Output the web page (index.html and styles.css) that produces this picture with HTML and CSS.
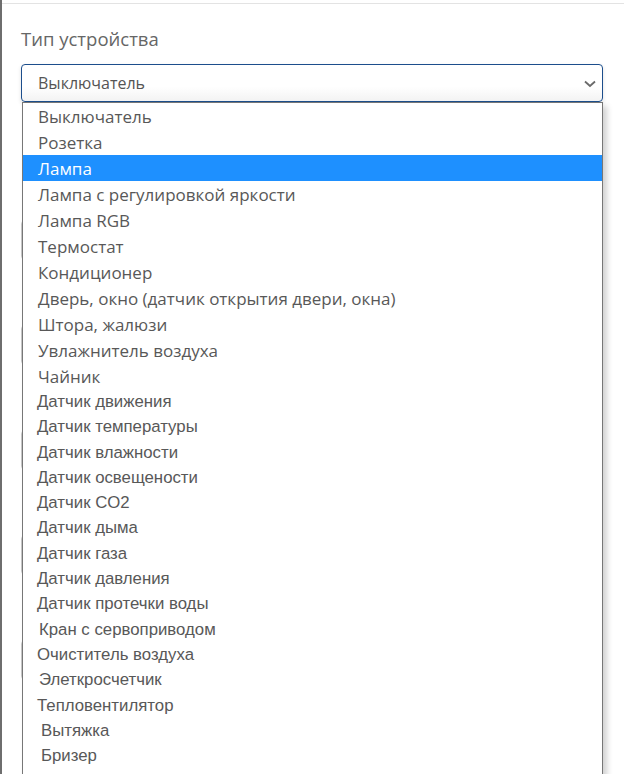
FILE: index.html
```html
<!DOCTYPE html>
<html lang="ru">
<head>
    <meta charset="UTF-8">
    <meta name="viewport" content="width=device-width, initial-scale=1.0">
    <title>Тип устройства</title>
    <link rel="stylesheet" href="styles.css">
</head>
<body>
    <div class="modal">
        <div class="modal-header"></div>
        <div class="modal-body">
            <div class="form-group select-group">
                <label class="form-label" for="deviceType">Тип устройства</label>
                <div class="select-box" id="deviceType">
                    <span class="select-value">Выключатель</span>
                    <svg class="chevron" width="12" height="8" viewBox="0 0 12 8">
                        <path d="M1 1.5 L6 6 L11 1.5" fill="none" stroke="#6a6a6a" stroke-width="1.8"/>
                    </svg>
                </div>

                <ul class="dropdown">
                    <li>Выключатель</li>
                    <li>Розетка</li>
                    <li class="selected">Лампа</li>
                    <li>Лампа с регулировкой яркости</li>
                    <li>Лампа RGB</li>
                    <li>Термостат</li>
                    <li>Кондиционер</li>
                    <li>Дверь, окно (датчик открытия двери, окна)</li>
                    <li>Штора, жалюзи</li>
                    <li>Увлажнитель воздуха</li>
                    <li>Чайник</li>
                    <li class="plain">Датчик движения</li>
                    <li class="plain">Датчик температуры</li>
                    <li class="plain">Датчик влажности</li>
                    <li class="plain">Датчик освещености</li>
                    <li class="plain">Датчик CO2</li>
                    <li class="plain">Датчик дыма</li>
                    <li class="plain">Датчик газа</li>
                    <li class="plain">Датчик давления</li>
                    <li class="plain">Датчик протечки воды</li>
                    <li class="plain shift">Кран с сервоприводом</li>
                    <li class="plain">Очиститель воздуха</li>
                    <li class="plain shift">Элеткросчетчик</li>
                    <li class="plain">Тепловентилятор</li>
                    <li class="plain shift-more">Вытяжка</li>
                    <li class="plain shift-more">Бризер</li>
                </ul>
            </div>

            <!-- fields hidden under the open list -->
            <div class="form-group"><input class="form-control" type="text"></div>
            <div class="form-group"><input class="form-control" type="text"></div>
            <div class="form-group"><input class="form-control" type="text"></div>
            <div class="form-group"><input class="form-control" type="text"></div>
            <div class="form-group"><input class="form-control" type="text"></div>
        </div>
    </div>
</body>
</html>
```

FILE: styles.css
```css
body {
    margin: 0;
    font-family: 'Open Sans', 'Noto Sans', sans-serif;
    background: #fff;
    overflow: hidden;
}

.modal {
    height: 774px;
    border-left: 2px solid #6e6e6e;
}

.modal-header {
    height: 3px;
    border-bottom: 1px solid #e3e3e3;
}

.modal-body {
    padding: 23px 21px 0 19px;
}

.form-group {
    margin-bottom: 65px;
}

.select-group {
    position: relative;
    margin-bottom: 118px;
}

.form-label {
    display: block;
    font-size: 18.5px;
    color: #666;
    margin-bottom: 13px;
    line-height: 24px;
}

.select-box {
    height: 36px;
    border: 1px solid #1c4e8c;
    border-radius: 4px;
    display: flex;
    align-items: center;
    justify-content: space-between;
    padding: 0 6px 0 16px;
    background: linear-gradient(#fff 60%, #f3f3f3);
    box-shadow: 0 2px 4px rgba(0, 0, 0, 0.12);
}

.select-value {
    font-size: 16px;
    color: #555;
}

.chevron {
    display: block;
    margin-top: 2px;
}

.form-control {
    display: block;
    box-sizing: border-box;
    width: 100%;
    height: 40px;
    border: 1px solid #c8c8c8;
    border-radius: 4px;
}

.dropdown {
    position: absolute;
    top: 75px;
    left: 1px;
    right: 0;
    z-index: 2;
    margin: 0;
    padding: 0;
    list-style: none;
    background: #fff;
    border: 1px solid #777;
    border-bottom: none;
    height: 700px;
    overflow: hidden;
    box-shadow: 4px 4px 6px rgba(0, 0, 0, 0.18);
}

.dropdown li {
    height: 26px;
    line-height: 27px;
    padding-left: 15px;
    font-size: 17px;
    color: #585858;
    white-space: nowrap;
}

.dropdown li.selected {
    background: #1e90ff;
    color: #fff;
}

.dropdown li.plain {
    font-family: 'Liberation Sans', Arial, sans-serif;
    font-size: 16.8px;
    height: 25.3px;
    line-height: 25px;
    padding-left: 14px;
}

.dropdown li.shift {
    padding-left: 16px;
}

.dropdown li.shift-more {
    padding-left: 18px;
}
```
